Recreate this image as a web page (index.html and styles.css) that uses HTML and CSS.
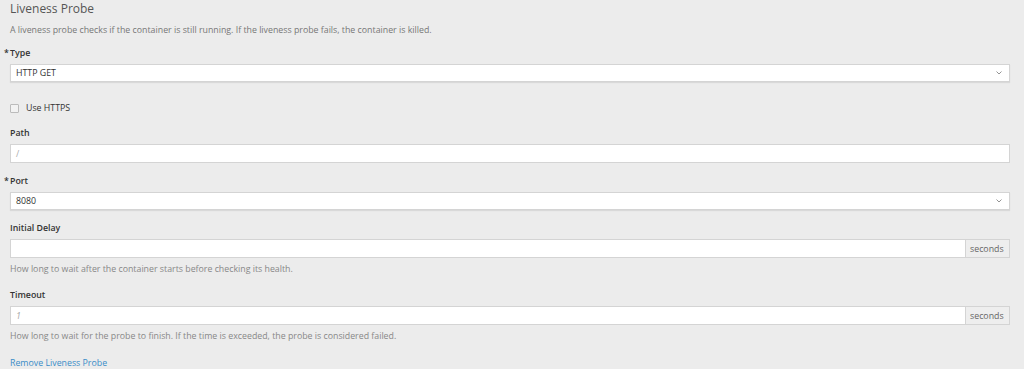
FILE: index.html
```html
<!DOCTYPE html>
<html>
<head>
<meta charset="utf-8">
<link rel="stylesheet" href="styles.css">
</head>
<body>
<div class="probe">
  <h3 class="title">Liveness Probe</h3>
  <p class="desc">A liveness probe checks if the container is still running. If the liveness probe fails, the container is killed.</p>

  <div class="group">
    <label class="label required">Type</label>
    <div class="select">
      <span>HTTP GET</span>
      <svg class="chev" width="6" height="4" viewBox="0 0 6 4"><path d="M0.5 0.5 L3 3 L5.5 0.5" fill="none" stroke="#888" stroke-width="0.9"/></svg>
    </div>
  </div>

  <div class="check-row">
    <span class="checkbox"></span>
    <span class="check-label">Use HTTPS</span>
  </div>

  <div class="group">
    <label class="label">Path</label>
    <div class="input"><span class="ph">/</span></div>
  </div>

  <div class="group">
    <label class="label required">Port</label>
    <div class="select">
      <span>8080</span>
      <svg class="chev" width="6" height="4" viewBox="0 0 6 4"><path d="M0.5 0.5 L3 3 L5.5 0.5" fill="none" stroke="#888" stroke-width="0.9"/></svg>
    </div>
  </div>

  <div class="group">
    <label class="label">Initial Delay</label>
    <div class="input-group">
      <div class="input grow"></div>
      <div class="addon">seconds</div>
    </div>
    <div class="help">How long to wait after the container starts before checking its health.</div>
  </div>

  <div class="group">
    <label class="label">Timeout</label>
    <div class="input-group">
      <div class="input grow"><span class="ph italic">1</span></div>
      <div class="addon">seconds</div>
    </div>
    <div class="help">How long to wait for the probe to finish. If the time is exceeded, the probe is considered failed.</div>
  </div>

  <a class="remove" href="#">Remove Liveness Probe</a>
</div>
</body>
</html>
```

FILE: styles.css
```css
html, body {
  margin: 0;
  padding: 0;
  background: #ececec;
}
body {
  font-family: "Open Sans", "DejaVu Sans", sans-serif;
  font-size: 8.8px;
  line-height: 12px;
  color: #333;
}
.probe {
  padding: 1px 14px 0 10px;
}
.title {
  margin: 0;
  font-size: 12px;
  line-height: 16px;
  font-weight: 400;
  color: #555;
}
.desc {
  margin: 7px 0 11px 0;
  color: #777;
}
.group {
  margin-bottom: 12px;
}
.label {
  display: block;
  font-weight: 600;
  color: #333;
  margin-bottom: 5px;
  position: relative;
}
.required::before {
  content: "*";
  position: absolute;
  left: -6px;
  top: 0;
  font-weight: 600;
}
.select {
  display: flex;
  align-items: center;
  justify-content: space-between;
  height: 18px;
  box-sizing: border-box;
  padding: 0 7px 0 5px;
  background: #fff;
  border: 1px solid #d4d4d4;
  box-shadow: 0 1px 1px rgba(0,0,0,0.08);
  color: #333;
}
.chev {
  display: block;
}
.input {
  display: flex;
  align-items: center;
  height: 19px;
  box-sizing: border-box;
  padding: 0 5px;
  background: #fff;
  border: 1px solid #d4d4d4;
}
.ph {
  color: #aaa;
}
.italic {
  font-style: italic;
}
.input-group {
  display: flex;
}
.grow {
  flex: 1;
}
.addon {
  display: flex;
  align-items: center;
  height: 19px;
  box-sizing: border-box;
  padding: 0 4px;
  background: #eee;
  border: 1px solid #d4d4d4;
  border-left: none;
  color: #666;
  width: 44px;
}
.help {
  margin-top: 5px;
  color: #888;
  margin-bottom: 14px;
}
.check-row {
  display: flex;
  align-items: center;
  height: 12px;
  margin-top: 20px;
  margin-bottom: 13px;
}
.checkbox {
  width: 7px;
  height: 7px;
  border: 1px solid #bbb;
  background: #f2f2f2;
  border-radius: 1px;
  margin-right: 7px;
}
.check-label {
  color: #333;
}
.remove {
  display: block;
  color: #3a8cc8;
  text-decoration: none;
  margin-top: 15px;
}
```
